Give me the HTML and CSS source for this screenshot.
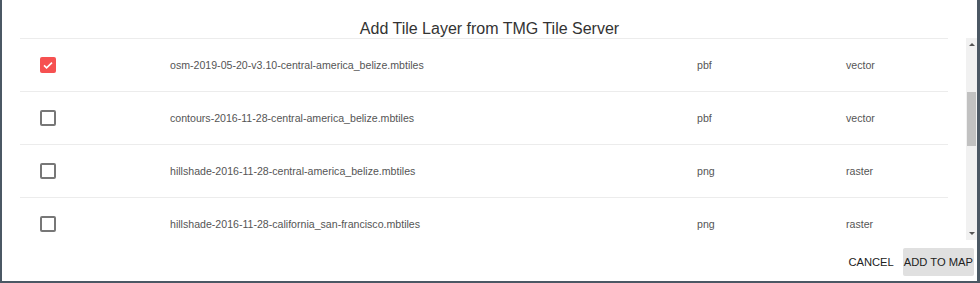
FILE: index.html
```html
<!DOCTYPE html>
<html>
<head>
<meta charset="utf-8">
<link rel="stylesheet" href="styles.css">
</head>
<body>
<div class="dialog">
  <h2 class="title">Add Tile Layer from TMG Tile Server</h2>
  <div class="content">
    <div class="list">
      <div class="row">
        <span class="cb checked"><svg viewBox="0 0 16 16" width="16" height="16"><path d="M4 8.3l2.6 2.5L12 5.6" fill="none" stroke="#fff" stroke-width="1.6"/></svg></span>
        <span class="name">osm-2019-05-20-v3.10-central-america_belize.mbtiles</span>
        <span class="fmt">pbf</span>
        <span class="type">vector</span>
      </div>
      <div class="row">
        <span class="cb"></span>
        <span class="name">contours-2016-11-28-central-america_belize.mbtiles</span>
        <span class="fmt">pbf</span>
        <span class="type">vector</span>
      </div>
      <div class="row">
        <span class="cb"></span>
        <span class="name">hillshade-2016-11-28-central-america_belize.mbtiles</span>
        <span class="fmt">png</span>
        <span class="type">raster</span>
      </div>
      <div class="row">
        <span class="cb"></span>
        <span class="name">hillshade-2016-11-28-california_san-francisco.mbtiles</span>
        <span class="fmt">png</span>
        <span class="type">raster</span>
      </div>
    </div>
    <div class="scrollbar">
      <span class="arrow up"></span>
      <div class="track"><div class="thumb"></div></div>
      <span class="arrow down"></span>
    </div>
  </div>
  <div class="actions">
    <button class="btn">CANCEL</button>
    <button class="btn primary">ADD TO MAP</button>
  </div>
</div>
</body>
</html>
```
FILE: styles.css
```css
html, body {
  margin: 0;
  padding: 0;
  height: 283px;
  overflow: hidden;
  background: #4b5864;
  font-family: "Liberation Sans", Arial, sans-serif;
}
.dialog {
  margin: 0 3px 0 2px;
  height: 281px;
  background: #fff;
  display: flex;
  flex-direction: column;
}
.title {
  margin: 0;
  height: 38px;
  box-sizing: border-box;
  padding-top: 19px;
  text-align: center;
  font-size: 16px;
  font-weight: normal;
  color: #333;
  line-height: 20px;
}
.content {
  display: flex;
  height: 202px;
  overflow: hidden;
}
.list {
  flex: 1;
  padding-left: 18px;
  padding-right: 18px;
  overflow: hidden;
}
.row {
  display: grid;
  grid-template-columns: 150px 527px 149px 1fr;
  align-items: center;
  height: 53px;
  border-top: 1px solid #ececec;
  box-sizing: border-box;
  font-size: 10.6px;
  color: #555;
}
.cb {
  margin-left: 20px;
  width: 16px;
  height: 16px;
  box-sizing: border-box;
  border: 2px solid #777;
  border-radius: 2px;
  display: block;
}
.cb.checked {
  border: none;
  background: #f65151;
}
.cb svg { display: block; }
.scrollbar {
  width: 11px;
  background: #f1f1f1;
  display: flex;
  flex-direction: column;
  align-items: center;
}
.track {
  flex: 1;
  width: 100%;
  padding-top: 41px;
  box-sizing: border-box;
}
.thumb {
  margin: 0 1px;
  height: 54px;
  background: #c1c1c1;
}
.arrow {
  display: block;
  width: 0;
  height: 0;
  border-left: 3px solid transparent;
  border-right: 3px solid transparent;
  margin: 5px 0;
}
.arrow.up { border-bottom: 3px solid #555; }
.arrow.down { border-top: 3px solid #555; }
.actions {
  flex: 1;
  display: flex;
  justify-content: flex-end;
  align-items: center;
  padding-top: 3px;
  padding-right: 3px;
}
.btn {
  font-family: "Liberation Sans", Arial, sans-serif;
  font-size: 11.2px;
  color: #222;
  background: transparent;
  border: none;
  padding: 0 1px;
  height: 28px;
  margin-left: 8px;
  border-radius: 2px;
}
.btn.primary {
  background: #e0e0e0;
}
```
